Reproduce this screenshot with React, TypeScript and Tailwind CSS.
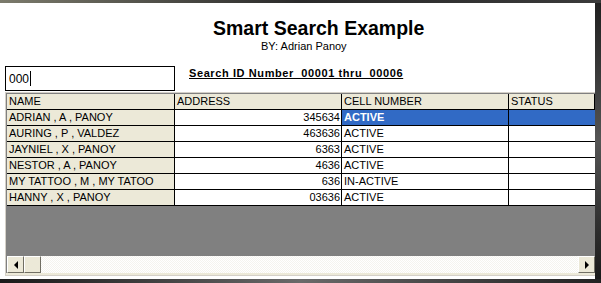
import React from 'react';

type Row = {
  name: string;
  address: string;
  cell: string;
  status: string;
};

const rows: Row[] = [
  { name: 'ADRIAN , A , PANOY', address: '345634', cell: 'ACTIVE', status: '' },
  { name: 'AURING , P , VALDEZ', address: '463636', cell: 'ACTIVE', status: '' },
  { name: 'JAYNIEL , X , PANOY', address: '6363', cell: 'ACTIVE', status: '' },
  { name: 'NESTOR , A , PANOY', address: '4636', cell: 'ACTIVE', status: '' },
  { name: 'MY TATTOO , M , MY TATOO', address: '636', cell: 'IN-ACTIVE', status: '' },
  { name: 'HANNY , X , PANOY', address: '03636', cell: 'ACTIVE', status: '' },
];

const font = { fontFamily: '"Liberation Sans", Arial, sans-serif' };

// win98-ish scroll button
const ScrollButton = ({ dir }: { dir: 'left' | 'right' }) => (
  <div className="w-[17px] h-[17px] bg-[#ece9d8] border-t border-l border-t-white border-l-white border-r border-b border-r-[#716f64] border-b-[#716f64] flex items-center justify-center">
    <svg width="8" height="8" viewBox="0 0 8 8">
      {dir === 'left' ? <path d="M2 4 L6 0 L6 8 Z" fill="#000" /> : <path d="M6 4 L2 0 L2 8 Z" fill="#000" />}
    </svg>
  </div>
);

export default function App() {
  return (
    <div className="w-[601px] h-[283px] bg-[#141414] flex flex-col overflow-hidden" style={font}>
      <div className="h-[3px] bg-gradient-to-r from-[#7c7b6c] via-[#2a2a2a] to-[#3a3a3a]" />
      <div className="flex h-[276px]">
        <div className="w-[595px] h-full bg-white flex flex-col text-black">
          {/* title */}
          <div className="pl-[213px] pt-[13px] text-[19.5px] leading-[24px] font-bold">Smart Search Example</div>
          <div className="pl-[261px] text-[11px] leading-[12px]">BY: Adrian Panoy</div>

          {/* search row */}
          <div className="flex items-start mt-[14px] pl-[5px]">
            <div className="w-[170px] h-[25px] border border-black flex items-center pl-[3px] text-[12px]">
              <span>000</span>
              <span className="w-px h-[15px] bg-black ml-px" />
            </div>
            <div className="ml-[14px] mt-px text-[11px] leading-[13px] font-bold underline tracking-[0.6px] whitespace-pre">
              {'Search ID Number  00001 thru  00006'}
            </div>
          </div>

          {/* grid */}
          <div className="ml-[5px] mt-px w-[590px] flex flex-col border-l border-t border-l-[#d4d0c8] border-t-[#d4d0c8]">
            <div className="border-l border-t border-l-[#808080] border-t-[#808080] flex flex-col text-[11px] leading-[15px]">
              <div className="grid grid-cols-[168px_167px_167px_1fr]">
                {['NAME', 'ADDRESS', 'CELL NUMBER', 'STATUS'].map((h) => (
                  <div key={h} className="h-[16px] bg-[#ece9d8] border-r border-b border-black pl-[2px] truncate">
                    {h}
                  </div>
                ))}
                {rows.map((r, i) => (
                  <React.Fragment key={r.name}>
                    <div className="h-[16px] bg-[#ece9d8] border-r border-b border-black pl-[2px] whitespace-nowrap">
                      {r.name}
                    </div>
                    <div className="h-[16px] bg-white border-r border-b border-black pr-px text-right">
                      {r.address}
                    </div>
                    <div
                      className={
                        i === 0
                          ? 'h-[16px] bg-[#316ac5] text-white font-bold border-r border-b border-black pl-[2px]'
                          : 'h-[16px] bg-white border-r border-b border-black pl-[2px]'
                      }
                    >
                      {r.cell}
                    </div>
                    <div className={i === 0 ? 'h-[16px] bg-[#316ac5] border-b border-black' : 'h-[16px] bg-white border-b border-black'}>
                      {r.status}
                    </div>
                  </React.Fragment>
                ))}
              </div>
              <div className="h-[50px] bg-[#808080]" />
              <div className="flex h-[17px] bg-[repeating-conic-gradient(#f5f4ee_0_25%,#ffffff_0_50%)] bg-[length:2px_2px]">
                <ScrollButton dir="left" />
                <div className="w-[17px] h-[17px] bg-[#ece9d8] border-t border-l border-t-white border-l-white border-r border-b border-r-[#716f64] border-b-[#716f64]" />
                <div className="flex-1" />
                <ScrollButton dir="right" />
              </div>
            </div>
            <div className="h-[3px] bg-[#ece9d8] border-b border-[#d4d0c8]" />
          </div>
        </div>
        <div className="w-[6px] h-full bg-gradient-to-b from-[#202020] via-[#555] to-[#1a1a1a]" />
      </div>
      <div className="h-[4px] bg-gradient-to-r from-[#1a1a1a] via-[#6a6a6a] to-[#222]" />
    </div>
  );
}
